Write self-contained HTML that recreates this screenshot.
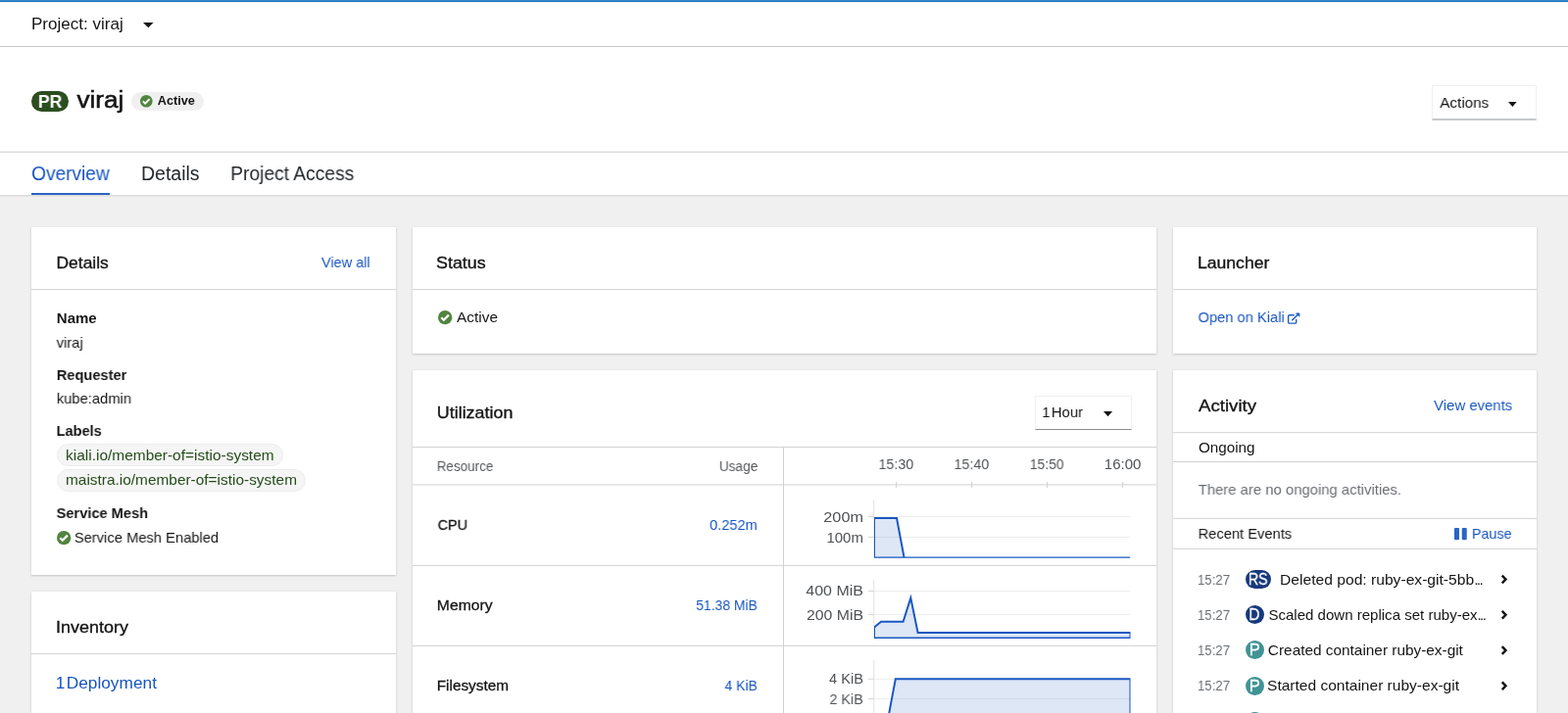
<!DOCTYPE html>
<html lang="en">
<head>
<meta charset="utf-8">
<title>viraj · Project Overview</title>
<style>
*{box-sizing:border-box;margin:0;padding:0}
html,body{width:1600px;height:728px;overflow:hidden;background:#f0f0f0}
body{font-family:"Liberation Sans",sans-serif;color:#151515;font-size:15px;position:relative}
.abs{position:absolute}
.t{position:absolute;white-space:nowrap;line-height:1;transform-origin:0 0;will-change:transform}
.el{letter-spacing:-1.6px}
.card{position:absolute;background:#fff;box-shadow:0 1px 2px rgba(3,3,3,.17),0 0 2px rgba(3,3,3,.06)}
.hr{position:absolute;height:1px;background:#d8d8d8}
.vr{position:absolute;width:1px;background:#d1d1d1}
.pill{position:absolute;background:#f5f5f5;border:1px solid #ededed;border-radius:12px}
.badge{position:absolute;border-radius:11px}
svg{position:absolute;overflow:visible}
</style>
</head>
<body>
<!-- top chrome -->
<div class="abs" style="left:0;top:0;width:1600px;height:200px;background:#fff"></div>
<div class="abs" style="left:0;top:0;width:1600px;height:1px;background:#3e89c8"></div>
<div class="abs" style="left:0;top:1px;width:1600px;height:1px;background:#0f76c4"></div>
<div class="abs" style="left:0;top:2px;width:1600px;height:1px;background:#f1f6fb"></div>
<div class="hr" style="left:0;top:47px;width:1600px;background:#c9c9c9"></div>
<div class="hr" style="left:0;top:154px;width:1600px;background:#ececec"></div>
<div class="hr" style="left:0;top:155px;width:1600px;background:#dddddd"></div>
<div class="hr" style="left:0;top:199px;width:1600px;background:#dcdcdc"></div>
<div class="hr" style="left:0;top:200px;width:1600px;background:#e6e6e6"></div>
<svg style="left:145.8px;top:22.7px" width="10.6" height="5.3" viewBox="0 0 10.6 5.3"><path d="M0 0h10.6L5.3 5.3z" fill="#151515"/></svg>
<div class="badge" style="left:32px;top:92.7px;width:38px;height:21px;background:#2b4e20"></div>
<div class="pill" style="left:134px;top:94px;width:73.7px;height:18.8px;border:0;background:#f0f0f0;border-radius:10px"></div>
<svg style="left:142.90px;top:97.10px" width="12.6" height="12.6" viewBox="0 0 16 16"><circle cx="8" cy="8" r="8" fill="#518440"/><path d="M3.7 8.1L6.5 10.9L12.2 5.2" fill="none" stroke="#fff" stroke-width="2.5"/></svg>
<div class="abs" style="left:1461px;top:87px;width:107px;height:36px;border:1px solid #f0f0f0;border-bottom:2px solid #c6c8ca;background:#fff"></div>
<svg style="left:1539.4px;top:103.5px" width="8.7" height="5.0" viewBox="0 0 8.7 5.0"><path d="M0 0h8.7L4.35 5.0z" fill="#151515"/></svg>
<div class="abs" style="left:32px;top:197px;width:80px;height:2.2px;background:#2a64c5"></div>
<!-- cards -->
<div class="card" style="left:32px;top:232px;width:372px;height:355px"></div>
<div class="card" style="left:32px;top:604px;width:372px;height:140px"></div>
<div class="card" style="left:421px;top:232px;width:759px;height:129px"></div>
<div class="card" style="left:421px;top:378px;width:759px;height:370px"></div>
<div class="card" style="left:1197px;top:232px;width:371px;height:129px"></div>
<div class="card" style="left:1197px;top:378px;width:371px;height:370px"></div>
<div class="hr" style="left:32px;top:295px;width:372px;background:#d6d6d6"></div>
<div class="hr" style="left:32px;top:296px;width:372px;background:#fafafa"></div>
<div class="hr" style="left:32px;top:667px;width:372px;background:#d6d6d6"></div>
<div class="hr" style="left:32px;top:668px;width:372px;background:#fafafa"></div>
<div class="hr" style="left:421px;top:295px;width:759px;background:#d6d6d6"></div>
<div class="hr" style="left:421px;top:296px;width:759px;background:#fafafa"></div>
<div class="hr" style="left:421px;top:456px;width:759px;background:#d6d6d6"></div>
<div class="hr" style="left:421px;top:457px;width:759px;background:#fafafa"></div>
<div class="hr" style="left:421px;top:494px;width:759px;background:#e6e6e6"></div>
<div class="hr" style="left:421px;top:495px;width:759px;background:#eaeaea"></div>
<div class="hr" style="left:421px;top:576px;width:759px;background:#f8f8f8"></div>
<div class="hr" style="left:421px;top:577px;width:759px;background:#d8d8d8"></div>
<div class="hr" style="left:421px;top:658px;width:759px;background:#fafafa"></div>
<div class="hr" style="left:421px;top:659px;width:759px;background:#d6d6d6"></div>
<div class="hr" style="left:1197px;top:295px;width:371px;background:#d6d6d6"></div>
<div class="hr" style="left:1197px;top:296px;width:371px;background:#fafafa"></div>
<div class="hr" style="left:1197px;top:441px;width:371px;background:#d8d8d8"></div>
<div class="hr" style="left:1197px;top:442px;width:371px;background:#f8f8f8"></div>
<div class="hr" style="left:1197px;top:471px;width:371px;background:#d1d1d1"></div>
<div class="hr" style="left:1197px;top:528px;width:371px;background:#f8f8f8"></div>
<div class="hr" style="left:1197px;top:529px;width:371px;background:#d8d8d8"></div>
<div class="hr" style="left:1197px;top:559px;width:371px;background:#f6f6f6"></div>
<div class="hr" style="left:1197px;top:560px;width:371px;background:#dadada"></div>
<div class="vr" style="left:799px;top:457px;height:280px"></div>
<div class="pill" style="left:57.5px;top:453px;width:231.2px;height:23.2px"></div>
<div class="pill" style="left:57.5px;top:478.7px;width:254.2px;height:23.2px"></div>
<svg style="left:57.75px;top:541.65px" width="14.3" height="14.3" viewBox="0 0 16 16"><circle cx="8" cy="8" r="8" fill="#518440"/><path d="M3.7 8.1L6.5 10.9L12.2 5.2" fill="none" stroke="#fff" stroke-width="2.5"/></svg>
<svg style="left:446.55px;top:316.75px" width="14.3" height="14.3" viewBox="0 0 16 16"><circle cx="8" cy="8" r="8" fill="#518440"/><path d="M3.7 8.1L6.5 10.9L12.2 5.2" fill="none" stroke="#fff" stroke-width="2.5"/></svg>
<div class="abs" style="left:1056px;top:404px;width:99px;height:35px;border:1px solid #f1f1f1;border-bottom:1px solid #8a8d90;background:#fff"></div>
<svg style="left:1125.6px;top:420px" width="9.15" height="5.25" viewBox="0 0 9.15 5.25"><path d="M0 0h9.15L4.58 5.25z" fill="#151515"/></svg>
<svg style="left:0;top:0" width="1600" height="728" viewBox="0 0 1600 728">
<defs>
<clipPath id="c1"><rect x="892" y="500" width="261.5" height="69.8"/></clipPath>
<clipPath id="c2"><rect x="892" y="585" width="261.5" height="66.9"/></clipPath>
<clipPath id="c3"><rect x="892" y="665" width="261.5" height="70"/></clipPath>
</defs>
<g fill="none" stroke-width="1">
<path d="M914.6 492v6M991.6 492v6M1068.6 492v6M1145.6 492v6" stroke="#d2d2d2"/>
<path d="M891.7 509.7v59.7M891.7 591.6v60.2M891.7 673.9v60" stroke="#e6e6e6" stroke-width="1.2"/>
<path d="M892 527.5h261.4M892 548.5h261.4M892 603.5h261.4M892 627.5h261.4M892 693.3h261.4M892 713.6h261.4" stroke="#ededed"/>
<path d="M886 527.5h6M886 548.5h6M886 603.5h6M886 627.5h6M886 693.3h6M886 713.6h6" stroke="#d6d6d6"/>
</g>
<g fill="#2a64c5" fill-opacity=".155" stroke="#1a58c2" stroke-width="2" stroke-linejoin="miter">
<path clip-path="url(#c1)" d="M892 569.4V529H915L922.6 569.4H1153.5z"/>
<path clip-path="url(#c2)" d="M892 651.6V640.5L899.1 634.7H921.6L929.3 610.5L936.6 645.9H1153.5V651.6z"/>
<path clip-path="url(#c3)" d="M906.9 730L913.8 693.2H1153.5V730z"/>
</g>
</svg>
<svg style="left:0;top:0" width="1600" height="728" viewBox="0 0 1600 728" fill="none" stroke="#1d5bc4" stroke-linecap="round"><path stroke-width="1.4" d="M1320.2 321.7H1315.8Q1314.6 321.7 1314.6 322.9V328.9Q1314.6 330.1 1315.8 330.1H1321.5Q1322.7 330.1 1322.7 328.9V326.4"/><path stroke-width="1.5" d="M1318.7 326.8L1324.6 321"/><path stroke-width=".8" stroke-linejoin="round" fill="#1d5bc4" d="M1322.9 319.9H1325.9V322.9z"/></svg>
<svg style="left:1483.75px;top:538.75px" width="12.75" height="12.25" viewBox="0 0 12.75 12.25"><rect x="0" y="0" width="5" height="12.25" rx="1" fill="#2a64c5"/><rect x="7.75" y="0" width="5" height="12.25" rx="1" fill="#2a64c5"/></svg>
<div class="badge" style="left:1270.7px;top:581.7px;width:26.4px;height:19.3px;background:#17397c"></div>
<div class="badge" style="left:1270.6px;top:618.1px;width:19.2px;height:19.2px;background:#17397c"></div>
<div class="badge" style="left:1270.6px;top:654.3px;width:19.2px;height:19.2px;background:#419395"></div>
<div class="badge" style="left:1270.6px;top:690.5px;width:19.2px;height:19.2px;background:#419395"></div>
<div class="badge" style="left:1270.6px;top:726.6px;width:19.2px;height:19.2px;background:#419395"></div>
<svg style="left:0;top:0" width="1600" height="728" viewBox="0 0 1600 728" fill="none" stroke="#151515" stroke-width="2.4"><path d="M1532.75 587.70L1536.5 591.55L1532.75 595.40M1532.75 623.95L1536.5 627.80L1532.75 631.65M1532.75 660.20L1536.5 664.05L1532.75 667.90M1532.75 696.45L1536.5 700.30L1532.75 704.15"/></svg>
<!-- text -->
<div class="t" style="left:31px;top:16px;font-size:17px;transform:translateX(0.99px) scaleX(1.0023)">Project: viraj</div>
<div class="t" style="left:38px;top:95px;font-size:18px;transform:translateX(0.86px) scaleX(0.9784);color:#fff;font-weight:700">PR</div>
<div class="t" style="left:78px;top:91px;font-size:23.5px;transform:translateX(0.40px) scaleX(1.1102);-webkit-text-stroke:0.55px #151515">viraj</div>
<div class="t" style="left:160px;top:97px;font-size:12.5px;transform:translateX(0.69px) scaleX(1.0189);font-weight:700">Active</div>
<div class="t" style="left:1469px;top:97px;font-size:15.5px;transform:translateX(0.32px) scaleX(0.9814)">Actions</div>
<div class="t" style="left:32px;top:168px;font-size:19.5px;transform:translateX(0.08px) scaleX(0.9794);color:#1755c2">Overview</div>
<div class="t" style="left:144px;top:168px;font-size:19.5px;transform:translateX(0.03px) scaleX(0.9984);color:#1f2327">Details</div>
<div class="t" style="left:235px;top:168px;font-size:19.5px;transform:translateX(0.25px) scaleX(0.9847);color:#1f2327">Project Access</div>
<div class="t" style="left:57px;top:260px;font-size:17px;transform:translateX(0.55px) scaleX(1.0240);-webkit-text-stroke:0.35px #151515">Details</div>
<div class="t" style="left:327px;top:260px;font-size:15px;transform:translateX(0.95px) scaleX(0.9666);color:#1755c2">View all</div>
<div class="t" style="left:57px;top:317px;font-size:15px;transform:translateX(0.78px) scaleX(1.0022);font-weight:700">Name</div>
<div class="t" style="left:57px;top:342px;font-size:15px;transform:translateX(0.64px) scaleX(0.9856)">viraj</div>
<div class="t" style="left:57px;top:375px;font-size:15px;transform:translateX(0.77px) scaleX(0.9754);font-weight:700">Requester</div>
<div class="t" style="left:57px;top:399px;font-size:15px;transform:translateX(0.78px) scaleX(0.9831)">kube:admin</div>
<div class="t" style="left:57px;top:432px;font-size:15px;transform:translateX(0.58px) scaleX(0.9704);font-weight:700">Labels</div>
<div class="t" style="left:67px;top:457px;font-size:15px;transform:translateX(0.05px) scaleX(1.0304);color:#254c1b">kiali.io/member-of=istio-system</div>
<div class="t" style="left:66px;top:482px;font-size:15px;transform:translateX(0.97px) scaleX(1.0278);color:#254c1b">maistra.io/member-of=istio-system</div>
<div class="t" style="left:57px;top:516px;font-size:15px;transform:translateX(0.61px) scaleX(0.9744);font-weight:700">Service Mesh</div>
<div class="t" style="left:75px;top:541px;font-size:15px;transform:translateX(0.83px) scaleX(0.9813)">Service Mesh Enabled</div>
<div class="t" style="left:57px;top:632px;font-size:17px;transform:translateX(0.04px) scaleX(1.0565);-webkit-text-stroke:0.35px #151515">Inventory</div>
<div class="t" style="left:56px;top:689px;font-size:17px;transform:translateX(0.72px) scaleX(1.0170);color:#1755c2;word-spacing:-3.4px">1 Deployment</div>
<div class="t" style="left:445px;top:260px;font-size:17px;transform:translateX(0.02px) scaleX(1.0514);-webkit-text-stroke:0.35px #151515">Status</div>
<div class="t" style="left:466px;top:316px;font-size:15px;transform:translateX(0.11px) scaleX(1.0253)">Active</div>
<div class="t" style="left:445px;top:413px;font-size:17px;transform:translateX(0.82px) scaleX(1.0519);-webkit-text-stroke:0.35px #151515">Utilization</div>
<div class="t" style="left:1063px;top:413px;font-size:15px;transform:translateX(0.28px) scaleX(0.9863);word-spacing:-2.8px">1 Hour</div>
<div class="t" style="left:445px;top:469px;font-size:14px;transform:translateX(0.74px) scaleX(0.9593);color:#56595c">Resource</div>
<div class="t" style="left:733px;top:469px;font-size:14px;transform:translateX(0.82px) scaleX(0.9754);color:#56595c">Usage</div>
<div class="t" style="left:446px;top:528px;font-size:15px;transform:translateX(0.67px) scaleX(0.9603);-webkit-text-stroke:0.3px #151515">CPU</div>
<div class="t" style="left:724px;top:528px;font-size:15px;transform:translateX(0.13px) scaleX(0.9722);color:#1755c2">0.252m</div>
<div class="t" style="left:445px;top:610px;font-size:15px;transform:translateX(0.86px) scaleX(1.0454);-webkit-text-stroke:0.3px #151515">Memory</div>
<div class="t" style="left:710px;top:610px;font-size:15px;transform:translateX(0.26px) scaleX(0.9264);color:#1755c2">51.38 MiB</div>
<div class="t" style="left:445px;top:692px;font-size:15px;transform:translateX(0.68px) scaleX(1.0240);-webkit-text-stroke:0.3px #151515">Filesystem</div>
<div class="t" style="left:739px;top:692px;font-size:15px;transform:translateX(0.53px) scaleX(0.9332);color:#1755c2">4 KiB</div>
<div class="t" style="left:896px;top:467px;font-size:14.5px;transform:translateX(0.53px) scaleX(0.9814);color:#4f5255">15:30</div>
<div class="t" style="left:973px;top:467px;font-size:14.5px;transform:translateX(0.52px) scaleX(0.9846);color:#4f5255">15:40</div>
<div class="t" style="left:1050px;top:467px;font-size:14.5px;transform:translateX(0.80px) scaleX(0.9575);color:#4f5255">15:50</div>
<div class="t" style="left:1126px;top:467px;font-size:14.5px;transform:translateX(0.79px) scaleX(1.0379);color:#4f5255">16:00</div>
<div class="t" style="left:840px;top:521px;font-size:14.5px;transform:translateX(0.34px) scaleX(1.1202);color:#4f5255">200m</div>
<div class="t" style="left:843px;top:542px;font-size:14.5px;transform:translateX(0.46px) scaleX(1.0318);color:#4f5255">100m</div>
<div class="t" style="left:822px;top:596px;font-size:14.5px;transform:translateX(0.37px) scaleX(1.1000);color:#4f5255">400 MiB</div>
<div class="t" style="left:822px;top:621px;font-size:14.5px;transform:translateX(0.93px) scaleX(1.0913);color:#4f5255">200 MiB</div>
<div class="t" style="left:846px;top:686px;font-size:14.5px;transform:translateX(0.09px) scaleX(1.0055);color:#4f5255">4 KiB</div>
<div class="t" style="left:846px;top:707px;font-size:14.5px;transform:translateX(0.46px) scaleX(0.9906);color:#4f5255">2 KiB</div>
<div class="t" style="left:1221px;top:260px;font-size:17px;transform:translateX(0.97px) scaleX(1.0346);-webkit-text-stroke:0.35px #151515">Launcher</div>
<div class="t" style="left:1222px;top:316px;font-size:15px;transform:translateX(0.54px) scaleX(0.9786);color:#1755c2">Open on Kiali</div>
<div class="t" style="left:1223px;top:406px;font-size:17px;transform:translateX(0.01px) scaleX(1.0969);-webkit-text-stroke:0.35px #151515">Activity</div>
<div class="t" style="left:1463px;top:406px;font-size:15px;transform:translateX(0.09px) scaleX(0.9931);color:#1755c2">View events</div>
<div class="t" style="left:1222px;top:449px;font-size:15px;transform:translateX(0.90px) scaleX(1.0154)">Ongoing</div>
<div class="t" style="left:1222px;top:492px;font-size:15px;transform:translateX(0.68px) scaleX(0.9907);color:#6a6e73">There are no ongoing activities.</div>
<div class="t" style="left:1222px;top:537px;font-size:15px;transform:translateX(0.59px) scaleX(0.9788)">Recent Events</div>
<div class="t" style="left:1501px;top:537px;font-size:15px;transform:translateX(0.90px) scaleX(0.9558);color:#1755c2">Pause</div>
<div class="t" style="left:1221px;top:584px;font-size:15px;transform:translateX(0.94px) scaleX(0.8815);color:#6a6e73">15:27</div>
<div class="t" style="left:1221px;top:620px;font-size:15px;transform:translateX(0.94px) scaleX(0.8815);color:#6a6e73">15:27</div>
<div class="t" style="left:1221px;top:656px;font-size:15px;transform:translateX(0.94px) scaleX(0.8815);color:#6a6e73">15:27</div>
<div class="t" style="left:1221px;top:692px;font-size:15px;transform:translateX(0.94px) scaleX(0.8815);color:#6a6e73">15:27</div>
<div class="t" style="left:1273px;top:584px;font-size:16px;transform:translateX(0.90px) scaleX(0.8824);color:#fff;-webkit-text-stroke:0.3px #fff">RS</div>
<div class="t" style="left:1274px;top:620px;font-size:16px;transform:translateX(0.27px) scaleX(0.9608);color:#fff;-webkit-text-stroke:0.3px #fff">D</div>
<div class="t" style="left:1274px;top:656px;font-size:16px;transform:translateX(0.74px) scaleX(1.0361);color:#fff;-webkit-text-stroke:0.3px #fff">P</div>
<div class="t" style="left:1274px;top:693px;font-size:16px;transform:translateX(0.74px) scaleX(1.0361);color:#fff;-webkit-text-stroke:0.3px #fff">P</div>
<div class="t" style="left:1306px;top:584px;font-size:15px;transform:translateX(0.04px) scaleX(1.0420)">Deleted pod: ruby-ex-git-5bb<span class="el">...</span></div>
<div class="t" style="left:1294px;top:620px;font-size:15px;transform:translateX(0.43px) scaleX(1.0024)">Scaled down replica set ruby-ex<span class="el">...</span></div>
<div class="t" style="left:1293px;top:656px;font-size:15px;transform:translateX(0.87px) scaleX(1.0244)">Created container ruby-ex-git</div>
<div class="t" style="left:1293px;top:692px;font-size:15px;transform:translateX(0.02px) scaleX(1.0354)">Started container ruby-ex-git</div>
</body>
</html>
